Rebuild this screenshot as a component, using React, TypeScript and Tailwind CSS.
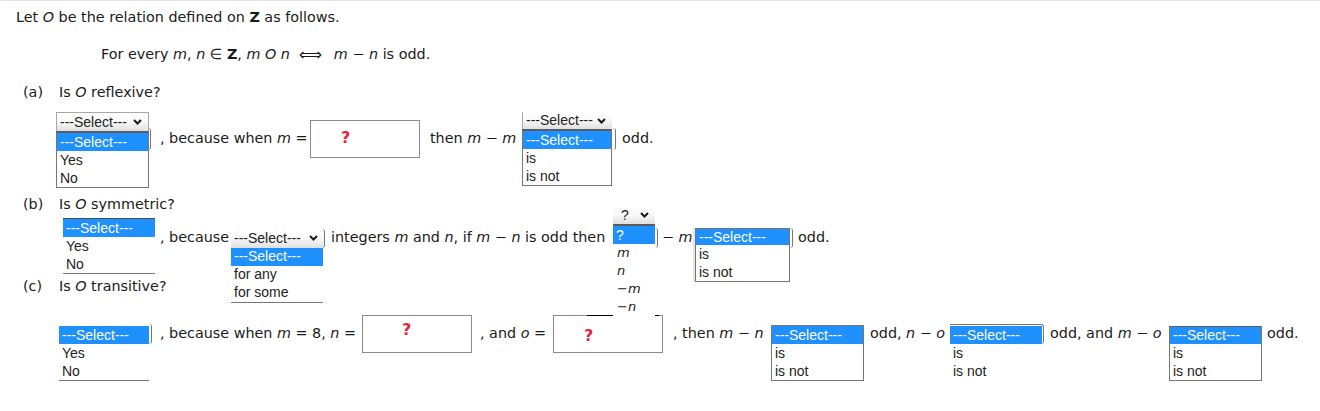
import React from "react";

type C = { children?: React.ReactNode };

function I({ children }: C) {
  return <span className="italic">{children}</span>;
}

function Chev() {
  return (
    <svg width="9" height="6" viewBox="0 0 9 6" className="shrink-0">
      <path d="M1 1 L4.5 4.5 L8 1" fill="none" stroke="#1a1a1a" strokeWidth="2" />
    </svg>
  );
}

function Head({ children, cls }: { children: React.ReactNode; cls: string }) {
  return (
    <div
      className={
        "flex items-center justify-between pl-[3px] pr-[6px] bg-linear-to-b from-white via-[#f8f8f8] to-[#e0e0e0] text-[#222] " +
        cls
      }
    >
      <span>{children}</span>
      <Chev />
    </div>
  );
}

function HL({ children = "---Select---", cls = "h-[18px]" }: { children?: React.ReactNode; cls?: string }) {
  return <div className={"flex items-center bg-[#1e90ff] text-white pl-[3px] " + cls}>{children}</div>;
}

function Opt({ children, cls = "pl-[3px]" }: { children?: React.ReactNode; cls?: string }) {
  return <div className={"flex items-center h-[18px] text-[#222] " + cls}>{children}</div>;
}

function T({ children, cls }: { children?: React.ReactNode; cls: string }) {
  return <span className={"shrink-0 whitespace-pre " + cls}>{children}</span>;
}

function Answer({ cls, q }: { cls: string; q: string }) {
  return (
    <div className={"relative shrink-0 w-[110px] h-[38px] border border-[#8c8c8c] bg-white " + cls}>
      <div className={"font-bold text-[16px] leading-[18px] text-[#ee1f3b] " + q}>?</div>
    </div>
  );
}

const F = "font-['Liberation_Sans',Arial,sans-serif] text-[14px]";

export default function App() {
  return (
    <div className="w-[1320px] h-[411px] bg-white border-t border-[#e4e4e4] pt-[7px] font-['DejaVu_Sans',Verdana,sans-serif] text-[14.35px] text-[#1a1a1a] overflow-hidden">
      {/* line 1 */}
      <div className="h-[20px] flex items-center pl-[16px]">
        <T cls="">
          Let <I>O</I> be the relation defined on <b>Z</b> as follows.
        </T>
      </div>

      {/* formula */}
      <div className="h-[20px] mt-[17px] flex items-center pl-[101px]">
        <T cls="">
          For every <I>m</I>, <I>n</I> ∈ <b>Z</b>, <I>m</I> <I>O</I> <I>n</I>
        </T>
        <span className="ml-[9px] mr-[12px] text-[16px] leading-[16px]">⟺</span>
        <T cls="">
          <I>m</I> − <I>n</I> is odd.
        </T>
      </div>

      {/* (a) */}
      <div className="h-[20px] mt-[18px] flex items-center pl-[23px]">
        <span className="w-[36px] shrink-0">(a)</span>
        <T cls="">
          Is <I>O</I> reflexive?
        </T>
      </div>

      {/* row a */}
      <div className="h-[20px] mt-[26px] flex items-center">
        <div className="relative shrink-0 ml-[55px] w-[96px] h-[22px] border-r border-[#767676] rounded-r-[3px]">
          <div className={"absolute z-10 left-[1px] top-[-16px] w-[93px] " + F}>
            <Head cls="h-[19px] border border-b-0 border-[#a8a8a8]">---Select---</Head>
            <div className="bg-white border-t-2 border-t-[#5c5c5c] border-x border-b border-x-[#767676] border-b-[#767676]">
              <HL />
              <Opt>Yes</Opt>
              <Opt>No</Opt>
            </div>
          </div>
        </div>
        <T cls="ml-[9px] w-[150px]">
          , because when <I>m</I> =
        </T>
        <Answer cls="" q="pl-[30px] pt-[8px]" />
        <T cls="ml-[10px] w-[92px]">
          then <I>m</I> − <I>m</I>
        </T>
        <div className="relative shrink-0 w-[94px] h-[22px] border-r border-[#767676] rounded-r-[3px]">
          <div className={"absolute z-10 left-0 top-[-16px] w-[90px] " + F}>
            <Head cls="h-[17px] border-l border-[#a8a8a8]">---Select---</Head>
            <div className="bg-white border-t-2 border-t-[#5c5c5c] border-x border-b border-x-[#767676] border-b-[#767676]">
              <HL />
              <Opt>is</Opt>
              <Opt>is not</Opt>
            </div>
          </div>
        </div>
        <T cls="ml-[6px]">odd.</T>
      </div>

      {/* (b) */}
      <div className="h-[20px] mt-[46px] flex items-center pl-[23px]">
        <span className="w-[36px] shrink-0">(b)</span>
        <T cls="">
          Is <I>O</I> symmetric?
        </T>
      </div>

      {/* row b */}
      <div className="h-[20px] mt-[13px] flex items-center">
        <div className="relative shrink-0 ml-[62px] w-[93px] h-[20px]">
          <div className={"absolute z-10 left-[1px] top-[-10px] w-[92px] bg-white border-t border-t-[#4a4a4a] border-b border-b-[#767676] " + F}>
            <HL />
            <Opt>Yes</Opt>
            <Opt>No</Opt>
          </div>
        </div>
        <T cls="ml-[5px] w-[71px]">, because</T>
        <div className={"relative shrink-0 w-[94px] h-[19px] " + F}>
          <Head cls="h-[19px] border-r border-[#767676] rounded-r-[3px]">---Select---</Head>
          <div className="absolute z-10 left-0 top-[19px] w-[92px] bg-white border-b border-b-[#767676]">
            <HL />
            <Opt>for any</Opt>
            <Opt>for some</Opt>
          </div>
        </div>
        <T cls="ml-[6px] w-[282px]">
          integers <I>m</I> and <I>n</I>, if <I>m</I> − <I>n</I> is odd then
        </T>
        <div className="relative shrink-0 w-[45px] h-[20px] border-r border-[#767676] rounded-r-[3px]">
          <div className="absolute z-10 left-0 top-[-22px] w-[42px]">
            <div className={F}>
              <Head cls="h-[18px] pl-[8px] pr-[4px]">?</Head>
            </div>
            <div className="bg-white border-t-2 border-t-[#5c5c5c]">
              <div className={F}>
                <HL>?</HL>
              </div>
              <div className="text-[13px]">
                <Opt cls="pl-[4px]">
                  <I>m</I>
                </Opt>
                <Opt cls="pl-[4px]">
                  <I>n</I>
                </Opt>
                <Opt cls="pl-[4px]">
                  −<I>m</I>
                </Opt>
                <Opt cls="pl-[4px]">
                  −<I>n</I>
                </Opt>
              </div>
            </div>
          </div>
        </div>
        <T cls="ml-[4px] w-[33px]">
          − <I>m</I>
        </T>
        <div className="relative shrink-0 w-[98px] h-[20px] border-r border-[#767676] rounded-r-[3px]">
          <div className={"absolute z-10 left-0 top-0 w-[95px] bg-white border border-[#767676] shadow-[-2px_0_0_#e6e6e6] " + F}>
            <HL cls="h-[16px]" />
            <Opt>is</Opt>
            <Opt>is not</Opt>
          </div>
        </div>
        <T cls="ml-[5px]">odd.</T>
      </div>

      {/* (c) */}
      <div className="h-[20px] mt-[29px] flex items-center pl-[23px]">
        <span className="w-[36px] shrink-0">(c)</span>
        <T cls="">
          Is <I>O</I> transitive?
        </T>
      </div>

      {/* row c */}
      <div className="h-[20px] mt-[27px] flex items-center">
        <div className="relative shrink-0 ml-[59px] w-[93px] h-[20px] border-r border-[#767676] rounded-r-[3px]">
          <div className={"absolute z-10 left-0 top-[2px] w-[90px] bg-white border-b border-b-[#767676] " + F}>
            <HL />
            <Opt>Yes</Opt>
            <Opt>No</Opt>
          </div>
        </div>
        <T cls="ml-[8px] w-[202px]">
          , because when <I>m</I> = 8, <I>n</I> =
        </T>
        <Answer cls="" q="pl-[39px] pt-[5px]" />
        <T cls="ml-[8px] w-[73px]">
          , and <I>o</I> =
        </T>
        <div className="relative shrink-0">
          <Answer cls="" q="pl-[30px] pt-[11px]" />
          <div className="absolute left-[34px] top-0 w-[72px] h-px bg-black" />
        </div>
        <T cls="ml-[10px] w-[98px]">
          , then <I>m</I> − <I>n</I>
        </T>
        <div className="relative shrink-0 w-[93px] h-[20px]">
          <div className={"absolute z-10 left-0 top-[1px] w-[93px] bg-white border border-[#767676] " + F}>
            <HL />
            <Opt>is</Opt>
            <Opt>is not</Opt>
          </div>
        </div>
        <T cls="ml-[6px] w-[80px]">
          odd, <I>n</I> − <I>o</I>
        </T>
        <div className="relative shrink-0 w-[94px] h-[20px] border-t border-r border-[#767676] rounded-r-[3px]">
          <div className={"absolute z-10 left-0 top-[1px] w-[92px] " + F}>
            <HL />
            <Opt>is</Opt>
            <Opt>is not</Opt>
          </div>
        </div>
        <T cls="ml-[6px] w-[119px]">
          odd, and <I>m</I> − <I>o</I>
        </T>
        <div className="relative shrink-0 w-[93px] h-[20px]">
          <div className={"absolute z-10 left-0 top-[2px] w-[93px] bg-white border border-[#767676] border-t-[#5c5c5c] " + F}>
            <HL cls="h-[17px]" />
            <Opt>is</Opt>
            <Opt>is not</Opt>
          </div>
        </div>
        <T cls="ml-[5px]">odd.</T>
      </div>
    </div>
  );
}
